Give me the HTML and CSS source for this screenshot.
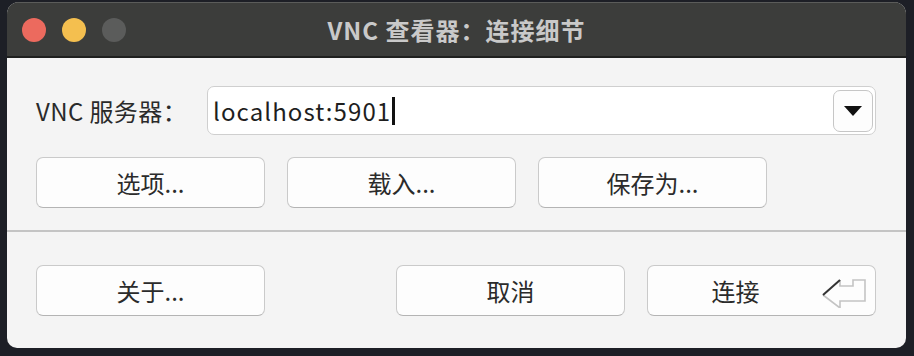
FILE: index.html
```html
<!DOCTYPE html>
<html lang="zh-CN">
<head>
  <meta charset="UTF-8">
  <meta name="viewport" content="width=device-width, initial-scale=1.0">
  <title>VNC 查看器：连接细节</title>
  <link rel="stylesheet" href="styles.css">
</head>
<body>
  <div class="window">
    <div class="titlebar">
      <div class="lights">
        <span class="light red"></span>
        <span class="light yellow"></span>
        <span class="light grey"></span>
      </div>
      <div class="title">VNC 查看器：连接细节</div>
    </div>

    <div class="content">
      <div class="server-row">
        <label class="server-label">VNC 服务器：</label>
        <div class="combo">
          <span class="combo-text">localhost:5901</span><span class="caret"></span>
          <button class="combo-arrow" type="button">
            <svg width="18" height="10" viewBox="0 0 18 10"><polygon points="0,0 18,0 9,10" fill="#111"/></svg>
          </button>
        </div>
      </div>

      <div class="button-row">
        <button class="btn" type="button">选项...</button>
        <button class="btn" type="button">载入...</button>
        <button class="btn" type="button">保存为...</button>
      </div>
    </div>

    <div class="separator"></div>

    <div class="footer">
      <button class="btn" type="button">关于...</button>
      <div class="footer-right">
        <button class="btn" type="button">取消</button>
        <button class="btn btn-default" type="button">
          连接
          <svg class="return-icon" width="46" height="34" viewBox="0 0 46 34">
            <polyline points="18,6 18,12 31,12 31,6 43,6 43,27 18,27 18,34 1,21" fill="none" stroke="#c4c4c4" stroke-width="1.6"/>
            <line x1="1" y1="21" x2="18" y2="6" stroke="#333" stroke-width="2"/>
          </svg>
        </button>
      </div>
    </div>
  </div>
</body>
</html>
```

FILE: styles.css
```css
/* 基本スタイル */
body {
  margin: 0;
  width: 914px;
  height: 356px;
  overflow: hidden;
  background: #1d1f26;
  font-family: "PingFang SC", "Noto Sans CJK SC", "Noto Sans", sans-serif;
}

/* ウィンドウ */
.window {
  margin: 2px 0 0 7px;
  width: 899px;
  height: 346px;
  border-radius: 12px 12px 10px 10px;
  overflow: hidden;
  background: #f4f4f4;
  display: flex;
  flex-direction: column;
}

/* タイトルバー */
.titlebar {
  flex-shrink: 0;
  background: #3c3d3b;
  border-top: 1px solid #5b5c5a;
  border-bottom: 2px solid #1f201f;
  box-sizing: border-box;
  height: 56px;
  display: flex;
  align-items: center;
  position: relative;
}

.lights {
  display: flex;
  gap: 16px;
  margin-left: 15px;
}

.light {
  width: 24px;
  height: 24px;
  border-radius: 50%;
}

.red { background: #ec6a5e; }
.yellow { background: #f4bf4f; }
.grey { background: #5b5c5b; }

.title {
  position: absolute;
  left: 0;
  right: 0;
  text-align: center;
  color: #c9c9c9;
  font-size: 24px;
  font-weight: bold;
  letter-spacing: 1px;
}

/* 本体 */
.content {
  padding: 28px 30px 0 29px;
}

.server-row {
  display: flex;
  align-items: center;
}

.server-label {
  width: 171px;
  font-size: 24px;
  letter-spacing: 0.4px;
  color: #2a2a2a;
}

.combo {
  flex: 1;
  height: 49px;
  box-sizing: border-box;
  background: #fff;
  border: 1px solid #cfcfcf;
  border-radius: 7px;
  display: flex;
  align-items: center;
  padding-left: 5px;
}

.combo-text {
  font-size: 24px;
  letter-spacing: 1.1px;
  color: #1e1e1e;
}

.caret {
  width: 3px;
  height: 28px;
  background: #111;
  margin-left: 1px;
}

.combo-arrow {
  margin-left: auto;
  margin-right: 2px;
  width: 40px;
  height: 42px;
  box-sizing: border-box;
  border: 1px solid #c6c6c6;
  border-radius: 7px;
  background: #fdfdfd;
  display: flex;
  align-items: center;
  justify-content: center;
  padding: 0;
}

/* ボタン */
.button-row {
  display: flex;
  gap: 22px;
  margin-top: 22px;
}

.btn {
  width: 229px;
  height: 51px;
  box-sizing: border-box;
  background: #fdfdfd;
  border: 1px solid #cacaca;
  border-bottom-color: #b4b4b4;
  border-radius: 7px;
  font-family: inherit;
  font-size: 24px;
  color: #2b2b2b;
  padding: 0;
}

.btn-default {
  position: relative;
  padding-right: 52px;
}

.return-icon {
  position: absolute;
  right: 7px;
  top: 8px;
}

.separator {
  margin-top: 22px;
  height: 2px;
  background: #c4c4c4;
}

.footer {
  display: flex;
  justify-content: space-between;
  padding: 33px 30px 0 29px;
}

.footer-right {
  display: flex;
  gap: 22px;
}
```
